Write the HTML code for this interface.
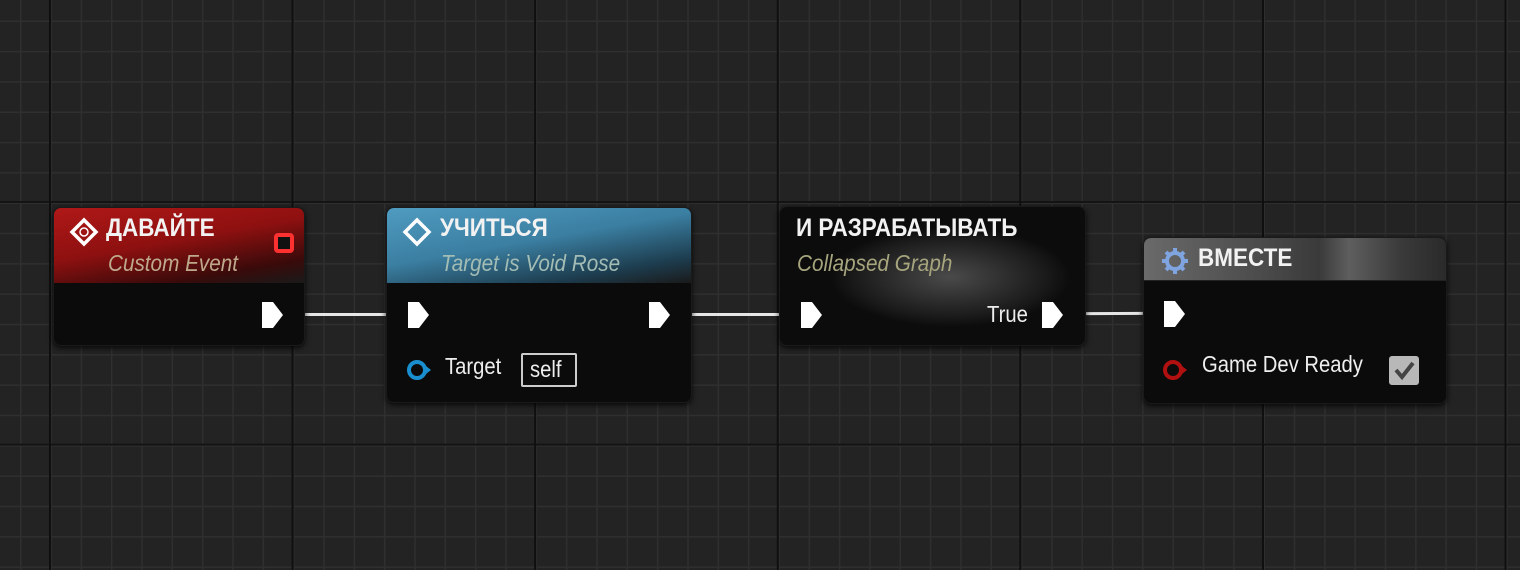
<!DOCTYPE html>
<html><head><meta charset="utf-8"><style>
*{margin:0;padding:0;box-sizing:border-box}
body{width:1520px;height:570px;overflow:hidden;background:#232323;position:relative;font-family:"Liberation Sans","DejaVu Sans",sans-serif;}
.grid{position:absolute;inset:0;
background-image:
linear-gradient(90deg,#0f0f0f 0 2px,transparent 2px),
linear-gradient(0deg,#141414 0 2px,transparent 2px),
linear-gradient(90deg,#2f2f2f 0 1.5px,transparent 1.5px),
linear-gradient(0deg,#2f2f2f 0 1.5px,transparent 1.5px);
background-size:242.6px 242.6px,242.6px 242.6px,30.33px 30.33px,30.33px 30.33px;
background-position:49px 0,0 203px,20px 0,0 22px;}
.node{position:absolute;background:#0b0b0b;border-radius:8px;box-shadow:0 2px 6px rgba(0,0,0,.8);border:1px solid #1a1a1a;overflow:hidden}
.hdr{position:absolute;left:0;right:0;top:0}
.t{position:absolute;color:#f2f2f2;font-weight:bold;font-size:25px;transform:scaleX(.9);transform-origin:left}
.s{position:absolute;color:#bfa98d;font-style:italic;font-size:23px;transform:scaleX(.9);transform-origin:left}
.lbl{position:absolute;color:#eee;font-size:23px;transform:scaleX(.88);transform-origin:left}
.pin{position:absolute;width:26px;height:28px}
.wire{position:absolute;height:3px;background:#e6e6e6}
</style></head><body>
<div class="grid"></div>
<div class="wire" style="left:285px;top:313px;width:125px"></div>
<div class="wire" style="left:670px;top:313px;width:130px"></div>
<div class="wire" style="left:1064px;top:312px;width:100px;transform:rotate(-.3deg)"></div>

<!-- node1 -->
<div class="node" style="left:53px;top:207px;width:252px;height:139px">
 <div class="hdr" style="height:75px;background:linear-gradient(170deg,#b01818 0%,#8e1010 45%,#3a0a0a 80%,#1a1a1a 100%)"></div>
 <svg style="position:absolute;left:15px;top:9px" width="30" height="30" viewBox="0 0 30 30"><path d="M15 3 L27 15 L15 27 L3 15Z" fill="none" stroke="#fff" stroke-width="3.5"/><circle cx="15" cy="15" r="4" fill="none" stroke="#fff" stroke-width="1.5"/></svg>
 <div class="t" style="left:52px;top:6px">ДАВАЙТЕ</div>
 <div class="s" style="left:54px;top:42px">Custom Event</div>
 <div style="position:absolute;left:220px;top:25px;width:20px;height:20px;border:4px solid #ff3030;background:#111;border-radius:4px"></div>
 <svg class="pin" style="left:205px;top:93px" viewBox="0 0 26 28"><path d="M3 1H14L24 14L14 27H3Z" fill="#fff"/></svg>
</div>

<!-- node2 -->
<div class="node" style="left:386px;top:207px;width:306px;height:196px">
 <div class="hdr" style="height:75px;background:linear-gradient(170deg,#4f9bc0 0%,#3b7fa2 45%,#1d3d4f 80%,#1a1a1a 100%)"></div>
 <svg style="position:absolute;left:15px;top:9px" width="30" height="30" viewBox="0 0 30 30"><path d="M15 3 L27 15 L15 27 L3 15Z" fill="none" stroke="#fff" stroke-width="3.5"/></svg>
 <div class="t" style="left:53px;top:6px">УЧИТЬСЯ</div>
 <div class="s" style="left:54px;top:42px;color:#a3bdb5">Target is Void Rose</div>
 <svg class="pin" style="left:18px;top:93px" viewBox="0 0 26 28"><path d="M3 1H14L24 14L14 27H3Z" fill="#fff"/></svg>
 <svg class="pin" style="left:259px;top:93px" viewBox="0 0 26 28"><path d="M3 1H14L24 14L14 27H3Z" fill="#fff"/></svg>
 <svg style="position:absolute;left:19px;top:151px" width="30" height="22" viewBox="0 0 30 22"><circle cx="11" cy="11" r="8" fill="none" stroke="#1a8fd0" stroke-width="4"/><path d="M20 7L25 11L20 15Z" fill="#1a8fd0"/></svg>
 <div class="lbl" style="left:58px;top:145px">Target</div>
 <div style="position:absolute;left:134px;top:145px;width:56px;height:34px;border:2px solid #ccc;border-radius:2px"></div>
 <div class="lbl" style="left:143px;top:148px">self</div>
</div>

<!-- node3 -->
<div class="node" style="left:779px;top:206px;width:307px;height:140px;background:radial-gradient(ellipse 120px 50px at 170px 70px,#4a4a4a,#1a1a1a 80%,#0c0c0c)">
 <div class="t" style="left:16px;top:7px">И РАЗРАБАТЫВАТЬ</div>
 <div class="s" style="left:17px;top:43px;color:#a6a57e">Collapsed Graph</div>
 <svg class="pin" style="left:18px;top:94px" viewBox="0 0 26 28"><path d="M3 1H14L24 14L14 27H3Z" fill="#fff"/></svg>
 <div class="lbl" style="left:207px;top:94px">True</div>
 <svg class="pin" style="left:259px;top:94px" viewBox="0 0 26 28"><path d="M3 1H14L24 14L14 27H3Z" fill="#fff"/></svg>
</div>

<!-- node4 -->
<div class="node" style="left:1143px;top:237px;width:304px;height:167px">
 <div class="hdr" style="height:43px;background:linear-gradient(90deg,#6a6a6a 0%,#4a4a4a 40%,#3a3a3a 58%,#5e5e5e 68%,#3a3a3a 85%,#2a2a2a);border-bottom:1px solid #222"></div>
 <svg style="position:absolute;left:15px;top:8px" width="32" height="30" viewBox="0 0 32 30"><g fill="none" stroke="#7fa4e0" stroke-width="4"><circle cx="16" cy="15" r="8"/></g><g stroke="#7fa4e0" stroke-width="4"><path d="M16 2V6M16 24V28M3 15H7M25 15H29M7 6L10 9M22 21L25 24M25 6L22 9M10 21L7 24"/></g></svg>
 <div class="t" style="left:54px;top:6px">ВМЕСТЕ</div>
 <svg class="pin" style="left:17px;top:62px" viewBox="0 0 26 28"><path d="M3 1H14L24 14L14 27H3Z" fill="#fff"/></svg>
 <svg style="position:absolute;left:18px;top:121px" width="30" height="22" viewBox="0 0 30 22"><circle cx="11" cy="11" r="8" fill="none" stroke="#b01010" stroke-width="4"/><path d="M20 7L25 11L20 15Z" fill="#b01010"/></svg>
 <div class="lbl" style="left:58px;top:113px">Game Dev Ready</div>
 <div style="position:absolute;left:245px;top:118px;width:30px;height:29px;background:#b8b8b8;border-radius:3px"></div>
 <svg style="position:absolute;left:245px;top:118px" width="30" height="29" viewBox="0 0 30 29"><path d="M7 14L13 21L24 7" fill="none" stroke="#444" stroke-width="4"/></svg>
</div>
</body></html>
